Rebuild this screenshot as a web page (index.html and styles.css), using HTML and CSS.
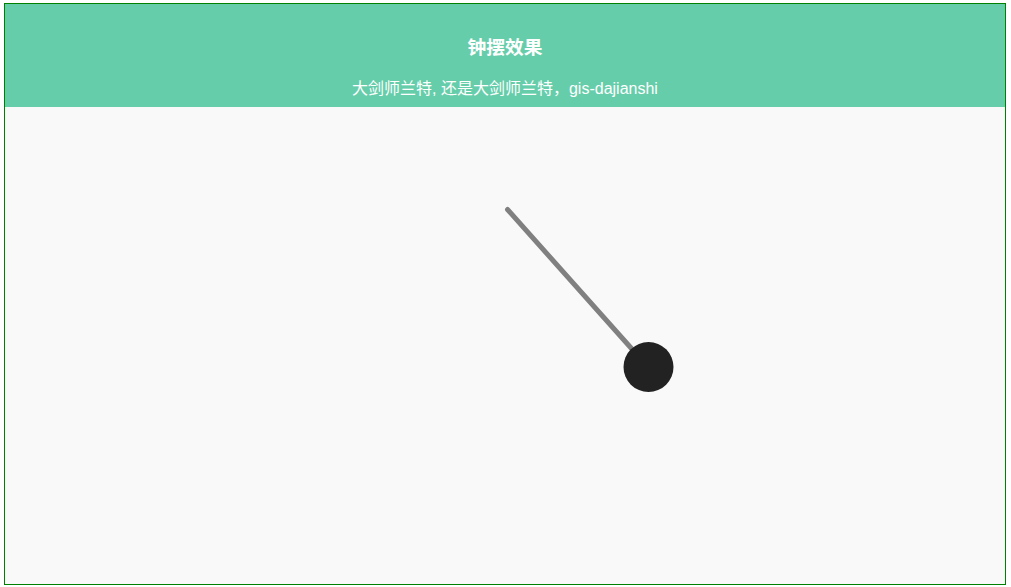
FILE: index.html
```html
<!DOCTYPE html>
<html lang="zh">
<head>
<meta charset="utf-8">
<title>钟摆效果</title>
<link rel="stylesheet" href="styles.css">
</head>
<body>
<div class="frame">
  <header class="header">
    <h3 class="title">钟摆效果</h3>
    <p class="subtitle">大剑师兰特, 还是大剑师兰特，gis-dajianshi</p>
  </header>
  <main class="stage">
    <svg class="pendulum" width="1000" height="477" viewBox="0 0 1000 477">
      <line x1="502.5" y1="102.5" x2="643" y2="260" stroke="#808080" stroke-width="5" stroke-linecap="round"/>
      <circle cx="643.5" cy="260" r="25" fill="#222222"/>
    </svg>
  </main>
</div>
</body>
</html>
```
FILE: styles.css
```css
html, body {
  margin: 0;
  padding: 0;
  background: #ffffff;
}
body {
  padding: 3px 5px 2px 4px;
  font-family: "Liberation Sans", "Noto Sans CJK SC", sans-serif;
}
.frame {
  width: 1000px;
  height: 580px;
  border: 1px solid #008000;
  display: flex;
  flex-direction: column;
  background: #f9f9f9;
}
.header {
  height: 103px;
  background: #66cdaa;
  color: #ffffff;
  display: flex;
  flex-direction: column;
  align-items: center;
  box-sizing: border-box;
  padding-top: 32px;
}
.title {
  margin: 0;
  font-size: 18.72px;
  line-height: 24px;
  font-weight: bold;
}
.subtitle {
  margin: 19px 0 0;
  font-size: 16px;
  line-height: 20px;
}
.stage {
  flex: 1;
  display: block;
  overflow: hidden;
}
.pendulum {
  display: block;
}
```
